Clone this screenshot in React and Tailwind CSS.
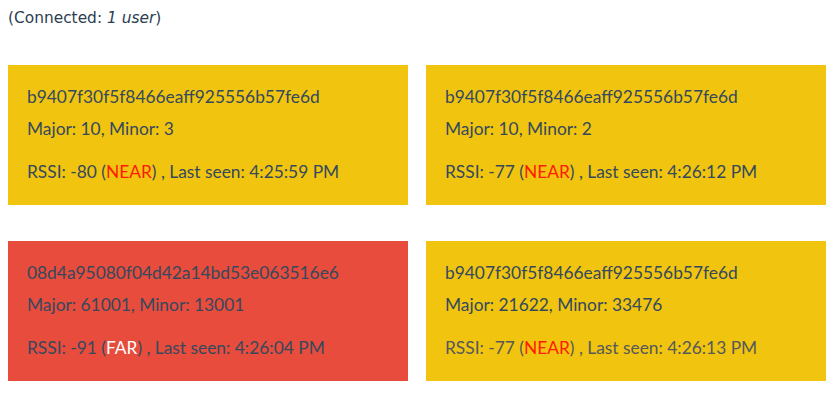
import React from 'react'

const beacons = [
  { uuid: 'b9407f30f5f8466eaff925556b57fe6d', major: 10, minor: 3, rssi: -80, zone: 'NEAR', seen: '4:25:59 PM' },
  { uuid: 'b9407f30f5f8466eaff925556b57fe6d', major: 10, minor: 2, rssi: -77, zone: 'NEAR', seen: '4:26:12 PM' },
  { uuid: '08d4a95080f04d42a14bd53e063516e6', major: 61001, minor: 13001, rssi: -91, zone: 'FAR', seen: '4:26:04 PM' },
  { uuid: 'b9407f30f5f8466eaff925556b57fe6d', major: 21622, minor: 33476, rssi: -77, zone: 'NEAR', seen: '4:26:13 PM', fading: true },
]

const BeaconCard = ({ b }) => {
  const far = b.zone === 'FAR'
  return (
    <div className={`h-[140px] pl-[19px] pt-[16px] text-[17.35px] text-[#34495e] ${far ? 'bg-[#e74c3c]' : 'bg-[#f1c40f]'}`}>
      <div className='leading-[32px]'>{b.uuid}</div>
      <div className='leading-[32px]'>Major: {b.major}, Minor: {b.minor}</div>
      <div className={`leading-[32px] mt-[11px] ${b.fading ? 'text-[#56585a]' : ''}`}>
        RSSI: {b.rssi} (<span className={far ? 'text-white' : 'text-[#ff1a00]'}>{b.zone}</span>) , Last seen: {b.seen}
      </div>
    </div>
  )
}

const App = () => {
  return (
    <div className='w-[837px] h-[394px] bg-white px-[8px] overflow-hidden' style={{ fontFamily: 'Lato, "Open Sans", sans-serif' }}>
      <div className='pt-[6px] text-[15.4px] leading-[24px] text-[#2c3e50]' style={{ fontFamily: '"DejaVu Sans", sans-serif' }}>
        (Connected: <em>1 user</em>)
      </div>
      <div className='grid grid-cols-[400px_400px] gap-x-[18px] gap-y-[36px] mt-[35px]'>
        {beacons.map((b, i) => <BeaconCard key={i} b={b} />)}
      </div>
    </div>
  )
}

export default App
